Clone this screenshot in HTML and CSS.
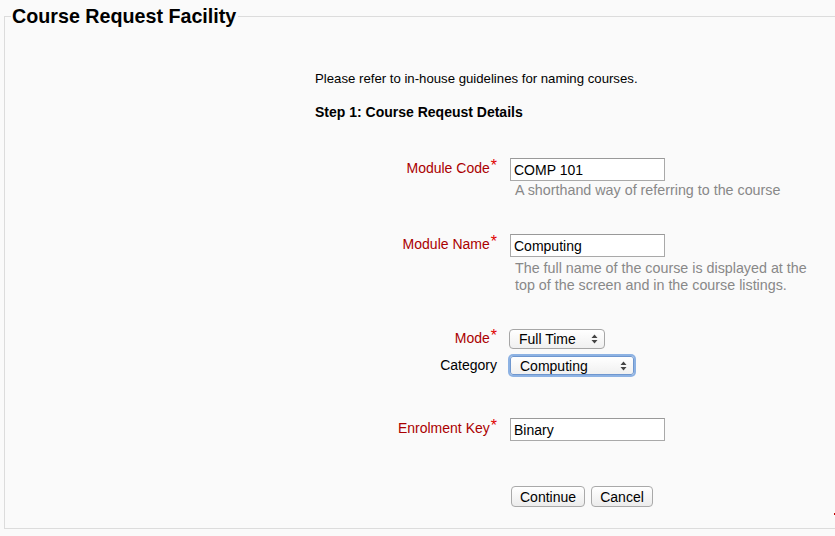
FILE: index.html
```html
<!DOCTYPE html>
<html>
<head>
<meta charset="utf-8">
<title>Course Request Facility</title>
<link rel="stylesheet" href="styles.css">
</head>
<body>
<form class="page">
  <fieldset class="box">
    <legend class="title">Course Request Facility</legend>
    <p class="intro">Please refer to in-house guidelines for naming courses.</p>
    <p class="step">Step 1: Course Reqeust Details</p>

    <div class="row row-code">
      <label class="lbl req">Module Code<span class="star">*</span></label>
      <div class="ctl">
        <input class="txt" type="text" value="COMP 101">
        <div class="help">A shorthand way of referring to the course</div>
      </div>
    </div>

    <div class="row row-name">
      <label class="lbl req">Module Name<span class="star">*</span></label>
      <div class="ctl">
        <input class="txt" type="text" value="Computing">
        <div class="help help-name">The full name of the course is displayed at the<br>top of the screen and in the course listings.</div>
      </div>
    </div>

    <div class="row row-mode">
      <label class="lbl req">Mode<span class="star">*</span></label>
      <div class="ctl">
        <span class="sel sel-mode">
          <span class="sel-text">Full Time</span>
          <svg class="arrows" width="7" height="10" viewBox="0 0 7 10"><path d="M3.5 0.5 L6.5 4 H0.5 Z M3.5 9.5 L6.5 6 H0.5 Z" fill="#444"/></svg>
        </span>
      </div>
    </div>

    <div class="row row-cat">
      <label class="lbl">Category</label>
      <div class="ctl">
        <span class="sel sel-cat focus">
          <span class="sel-text">Computing</span>
          <svg class="arrows" width="7" height="10" viewBox="0 0 7 10"><path d="M3.5 0.5 L6.5 4 H0.5 Z M3.5 9.5 L6.5 6 H0.5 Z" fill="#444"/></svg>
        </span>
      </div>
    </div>

    <div class="row row-key">
      <label class="lbl req">Enrolment Key<span class="star">*</span></label>
      <div class="ctl">
        <input class="txt" type="text" value="Binary">
      </div>
    </div>

    <div class="row row-btn">
      <div class="lbl"></div>
      <div class="ctl buttons">
        <button class="btn btn-continue" type="button">Continue</button>
        <button class="btn btn-cancel" type="button">Cancel</button>
      </div>
    </div>
    <span class="edge-mark"></span>
  </fieldset>
</form>
</body>
</html>
```

FILE: styles.css
```css
html, body {
  margin: 0;
  padding: 0;
  overflow: hidden;
  background: #fafafa;
}
body {
  font-family: "Liberation Sans", Arial, Helvetica, sans-serif;
  font-size: 14px;
  color: #000;
}
.page {
  margin: 0;
  padding: 5px 0 0 4px;
}
.box {
  position: relative;
  box-sizing: border-box;
  width: 870px;
  height: 524px;
  margin: 0;
  padding: 0;
  border: 1px solid #dcdcdc;
  background: #fafafa;
}
.title {
  margin-left: 6px;
  padding: 0 2px 0 1px;
  font-size: 19.7px;
  font-weight: bold;
  line-height: 22px;
}
.intro {
  margin: 43px 0 0 310px;
  line-height: 18px;
  font-size: 13.2px;
}
.step {
  margin: 15px 0 0 310px;
  line-height: 18px;
  font-weight: bold;
}
.row {
  display: flex;
  align-items: flex-start;
}
.lbl {
  width: 492px;
  flex: none;
  text-align: right;
  line-height: 18px;
  padding-top: 1px;
}
.lbl.req {
  color: #aa0000;
}
.star {
  color: #e00000;
  font-size: 16px;
  position: relative;
  top: -2px;
  margin-left: 1px;
}
.ctl {
  margin-left: 13px;
}
.txt {
  box-sizing: border-box;
  width: 155px;
  height: 23px;
  margin: 0;
  padding: 1px 3px 0;
  border: 1px solid #a9a9a9;
  border-top-color: #999;
  background: #fff;
  font-family: "Liberation Sans", Arial, Helvetica, sans-serif;
  font-size: 14px;
  color: #000;
  display: block;
}
.help {
  color: #888;
  margin-left: 5px;
  line-height: 17px;
  margin-top: 1px;
  font-size: 14.3px;
}
.help-name {
  margin-top: 3px;
}
.row-code { margin-top: 37px; }
.row-name { margin-top: 35px; }
.row-mode { margin-top: 35px; }
.row-mode .lbl { padding-top: 0; }
.row-cat { margin-top: 7px; }
.row-cat .lbl { padding-top: 0; }
.row-key { margin-top: 43px; }
.row-btn { margin-top: 45px; }

.sel {
  box-sizing: border-box;
  display: flex;
  align-items: center;
  justify-content: space-between;
  height: 20px;
  padding: 0 6px 0 9px;
  border: 1px solid #a6a6a6;
  border-radius: 4px;
  background: linear-gradient(#ffffff, #f0f0f0);
  font-size: 14px;
  line-height: 18px;
}
.sel-mode {
  width: 96px;
  margin-left: -1px;
}
.sel-cat {
  width: 124px;
  height: 19px;
}
.sel.focus {
  box-shadow: 0 0 0 2px #8db2e3;
  border-color: #6f97cf;
  border-radius: 3px;
}
.arrows { display: block; }

.buttons {
  display: flex;
  gap: 6px;
  margin-left: 14px;
}
.btn {
  box-sizing: border-box;
  height: 21px;
  margin: 0;
  padding: 0 8px;
  border: 1px solid #a9a9a9;
  border-radius: 4px;
  background: linear-gradient(#ffffff, #ececec);
  font-family: "Liberation Sans", Arial, Helvetica, sans-serif;
  font-size: 14px;
  color: #000;
  line-height: 18px;
}
.btn-continue { width: 74px; }
.btn-cancel { width: 62px; }
.edge-mark {
  position: absolute;
  left: 829px;
  top: 486px;
  width: 2px;
  height: 2px;
  background: #c00000;
}
```
